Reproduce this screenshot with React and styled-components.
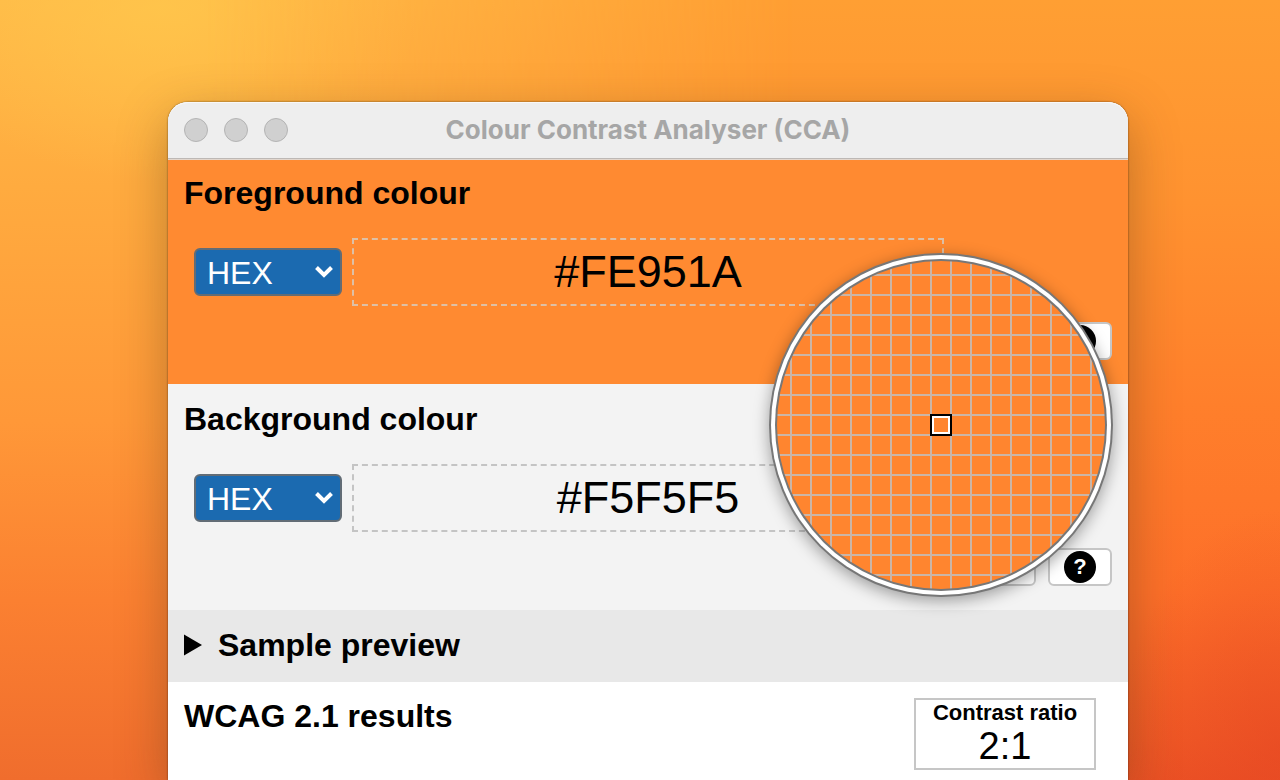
import React, { useId, useState } from 'react';
import styled, { createGlobalStyle } from 'styled-components';

const GlobalStyle = createGlobalStyle`
  *,
  *::before,
  *::after {
    box-sizing: border-box;
  }

  body {
    margin: 0;
    color: #000;
    font-family: 'Liberation Sans', Arial, sans-serif;
  }
`;

const Desktop = styled.div`
  position: relative;
  display: flex;
  height: 100vh;
  padding: 102px 152px 0 168px;
  overflow: hidden;
  background:
    radial-gradient(ellipse 160px 240px at 100% 96%, rgba(228, 66, 34, 0.5), rgba(240, 80, 34, 0) 100%),
    linear-gradient(180deg, #ff9f33 0%, #ff9230 26%, #ff7f2b 52%, #fd6f29 76%, #f05a26 95%, #ec5325 100%);

  &::before {
    content: '';
    position: absolute;
    inset: 0;
    background:
      radial-gradient(ellipse 260px 170px at 160px 10px, rgba(255, 200, 76, 0.7), rgba(255, 190, 70, 0) 100%),
      linear-gradient(180deg, #ffba48 0%, #ffab3f 24%, #ff9838 54%, #fb8031 77%, #f06d2d 100%);
    mask-image: linear-gradient(90deg, #000 16%, transparent 62%);
  }
`;

const Window = styled.main`
  position: relative;
  display: flex;
  flex: 1;
  flex-direction: column;
  min-width: 0;
  background: #fff;
  border-radius: 20px 20px 0 0;
  box-shadow: 0 0 2px rgba(0, 0, 0, 0.6), 0 16px 50px rgba(70, 50, 20, 0.36);
`;

const TitleBar = styled.header`
  position: relative;
  z-index: 1;
  display: grid;
  flex: none;
  grid-template-columns: 1fr auto 1fr;
  align-items: center;
  height: 56px;
  padding: 0 16px;
  background: #eee;
  border-radius: 20px 20px 0 0;
  box-shadow: inset 0 1px #f8f8f8, 0 1px #bdb8b5, 0 2px #e2d6cd;
`;

const WindowButtons = styled.div`
  display: flex;
  gap: 16px;
`;

const WindowButton = styled.button`
  width: 24px;
  height: 24px;
  padding: 0;
  background: #d0d0d0;
  border: 1px solid #b4b4b4;
  border-radius: 50%;
`;

const WindowTitle = styled.h1`
  margin: 0;
  color: #a6a6a6;
  font-family: Inter, sans-serif;
  font-size: 26px;
  font-weight: 700;
  line-height: 32px;
`;

const Section = styled.section`
  flex: none;
  padding: 17px 16px 24px;
  background: ${props => props.$tone};
`;

const Heading = styled.h2`
  margin: 0;
  font-size: 32px;
  font-weight: 700;
  line-height: 36px;
`;

const ValueRow = styled.div`
  display: grid;
  grid-template-columns: 148px 1fr 158px;
  gap: 10px;
  align-items: center;
  margin-top: 27px;
  padding-left: 10px;
`;

const SelectWrapper = styled.div`
  display: grid;
  align-items: center;

  > * {
    grid-area: 1 / 1;
  }
`;

const FormatSelect = styled.select`
  width: 100%;
  height: 48px;
  padding: 2px 11px 0;
  color: #fff;
  font-family: inherit;
  font-size: 32px;
  line-height: 42px;
  background: #1b6ab0;
  border: 2px solid #626c75;
  border-radius: 6px;
  appearance: none;
`;

const Chevron = styled.svg`
  justify-self: end;
  margin-right: 8px;
  pointer-events: none;
`;

const ValueInput = styled.input`
  width: 100%;
  min-width: 0;
  height: 68px;
  padding: 0 10px;
  color: inherit;
  font-family: inherit;
  font-size: 45px;
  text-align: center;
  background: transparent;
  border: 2px dashed ${props => props.$line};
  border-radius: 0;
`;

const Actions = styled.div`
  display: flex;
  justify-content: flex-end;
  gap: 12px;
  margin-top: 16px;
`;

const ActionButton = styled.button`
  display: flex;
  align-items: center;
  justify-content: center;
  width: 64px;
  height: 38px;
  padding: 0;
  background: #fff;
  border: 2px solid #c6c6c6;
  border-radius: 6px;
`;

const HelpMark = styled.span`
  width: 32px;
  height: 32px;
  color: #fff;
  font-family: 'Liberation Sans', Arial, sans-serif;
  font-size: 22px;
  font-weight: 700;
  line-height: 32px;
  text-align: center;
  background: #000;
  border-radius: 50%;
`;

const Preview = styled.section`
  flex: none;
  background: #e8e8e8;
`;

const PreviewToggle = styled.button`
  display: flex;
  align-items: center;
  gap: 16px;
  width: 100%;
  padding: 17px 16px 19px;
  color: inherit;
  font-family: inherit;
  font-size: 32px;
  font-weight: 700;
  line-height: 36px;
  background: none;
  border: none;
`;

const Results = styled.section`
  display: flex;
  align-items: flex-start;
  justify-content: space-between;
  padding: 16px 32px 16px 16px;
`;

const Ratio = styled.div`
  width: 182px;
  padding-bottom: 2px;
  text-align: center;
  border: 2px solid #c6c6c6;
`;

const RatioLabel = styled.h3`
  margin: 0;
  font-size: 22px;
  line-height: 26px;
`;

const RatioValue = styled.p`
  margin: 0;
  font-size: 38px;
  line-height: 40px;
`;

// Magnifier of the colour picker, floats over the panels
const Lens = styled.div`
  position: absolute;
  top: 159px;
  right: 23px;
  z-index: 2;
  display: flex;
  align-items: center;
  justify-content: center;
  width: 328px;
  height: 328px;
  background:
    linear-gradient(90deg, #cbb5a6 2px, transparent 2px) 13px 13px / 20px 20px,
    linear-gradient(#cbb5a6 2px, transparent 2px) 13px 13px / 20px 20px,
    #ff852f;
  border-radius: 50%;
  box-shadow:
    0 0 0 2px #777,
    0 0 0 6px #fff,
    0 0 0 8px #777,
    0 4px 16px 8px rgba(0, 0, 0, 0.36);
`;

const PickedPixel = styled.div`
  width: 22px;
  height: 22px;
  background: #ff852f;
  border: 2px solid #000;
  box-shadow: inset 0 0 0 2px #fff;
`;

const ColourPanel = ({ title, tone, line, initialValue }) => {
  const id = useId();
  const [value, setValue] = useState(initialValue);

  return (
    <Section $tone={tone} aria-labelledby={id}>
      <Heading id={id}>{title}</Heading>
      <ValueRow>
        <SelectWrapper>
          <FormatSelect aria-label={`${title} format`} defaultValue="HEX">
            <option>HEX</option>
            <option>RGB</option>
            <option>HSL</option>
            <option>HSV</option>
          </FormatSelect>
          <Chevron width="20" height="14" viewBox="0 0 20 14" aria-hidden="true">
            <path d="M2.5 2.5 10 10l7.5-7.5" fill="none" stroke="#fff" strokeWidth="4" />
          </Chevron>
        </SelectWrapper>
        <ValueInput
          type="text"
          aria-labelledby={id}
          $line={line}
          value={value}
          spellCheck="false"
          autoComplete="off"
          onChange={event => setValue(event.target.value)}
        />
      </ValueRow>
      <Actions>
        <ActionButton type="button" aria-label={`${title} sliders`} />
        <ActionButton type="button" aria-label={`${title} help`}>
          <HelpMark>?</HelpMark>
        </ActionButton>
      </Actions>
    </Section>
  );
};

const App = () => {
  const [open, setOpen] = useState(false);

  return (
    <>
      <GlobalStyle />
      <Desktop>
        <Window>
          <TitleBar>
            <WindowButtons>
              <WindowButton type="button" aria-label="Close" />
              <WindowButton type="button" aria-label="Minimise" />
              <WindowButton type="button" aria-label="Zoom" />
            </WindowButtons>
            <WindowTitle>Colour Contrast Analyser (CCA)</WindowTitle>
          </TitleBar>
          <ColourPanel title="Foreground colour" tone="#ff8a31" line="#dec0a6" initialValue="#FE951A" />
          <ColourPanel title="Background colour" tone="#f3f3f3" line="#c4c4c4" initialValue="#F5F5F5" />
          <Preview>
            <PreviewToggle type="button" aria-expanded={open} onClick={() => setOpen(!open)}>
              <svg width="18" height="22" viewBox="0 0 18 22" aria-hidden="true">
                <path d="M0 .5 18 11 0 21.5z" />
              </svg>
              Sample preview
            </PreviewToggle>
          </Preview>
          <Results>
            <Heading>WCAG 2.1 results</Heading>
            <Ratio>
              <RatioLabel>Contrast ratio</RatioLabel>
              <RatioValue>2:1</RatioValue>
            </Ratio>
          </Results>
          <Lens>
            <PickedPixel />
          </Lens>
        </Window>
      </Desktop>
    </>
  );
};

export default App;
